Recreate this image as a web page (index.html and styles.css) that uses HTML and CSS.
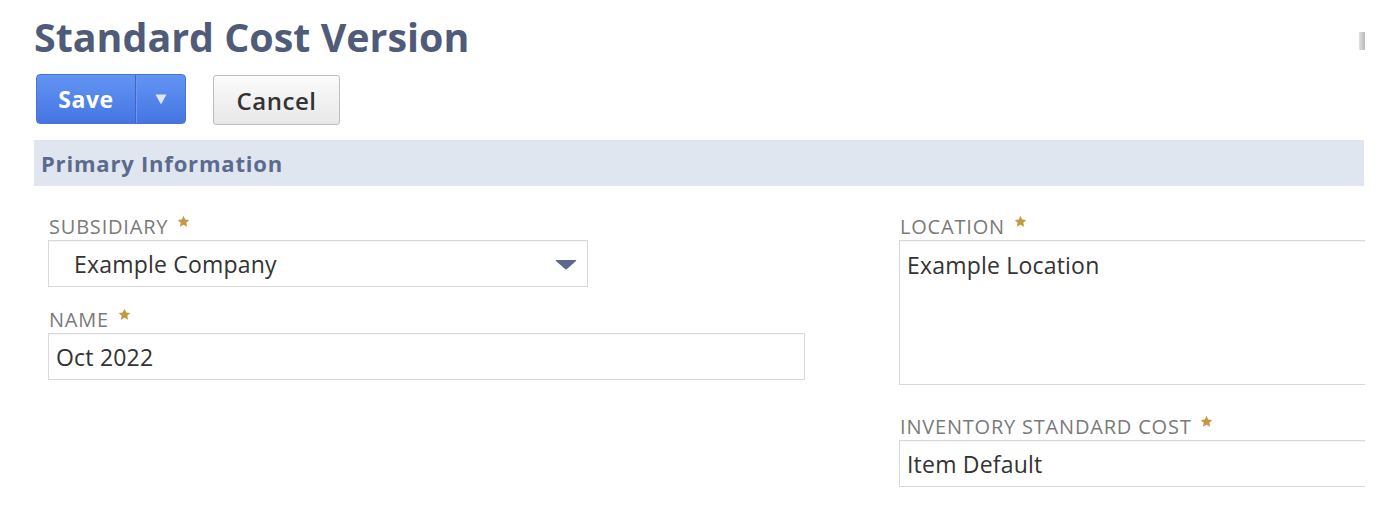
FILE: index.html
```html
<!DOCTYPE html>
<html lang="en">
<head>
<meta charset="utf-8">
<title>Standard Cost Version</title>
<link rel="stylesheet" href="styles.css">
</head>
<body>
<div class="page">
  <div class="title-row">
    <h1 class="title">Standard Cost Version</h1>
    <span class="corner-mark"></span>
  </div>
  <div class="actions">
    <div class="btn-split">
      <button class="btn-save" type="button">Save</button>
      <button class="btn-more" type="button" aria-label="More">
        <svg width="12" height="11" viewBox="0 0 12 11"><path d="M0.5 0.5 H11.5 L6 10.5 Z" fill="#dfe6f7"/></svg>
      </button>
    </div>
    <button class="btn-cancel" type="button">Cancel</button>
  </div>
  <div class="section-head">Primary Information</div>
  <div class="form-grid">
    <div class="col">
      <div class="field">
        <div class="label">SUBSIDIARY <span class="req"><svg width="13" height="13" viewBox="0 0 24 24"><path d="M12 1.5l3.2 6.9 7.5.9-5.5 5.1 1.5 7.4L12 18l-6.7 3.8 1.5-7.4L1.3 9.3l7.5-.9z" fill="#c39a42"/></svg></span></div>
        <div class="box select-box">
          <span class="value">Example Company</span>
          <svg class="caret" width="22" height="11" viewBox="0 0 22 11"><path d="M1 1 H21 Q21.5 1.4 21 2 L12 10 Q11 10.8 10 10 L1 2 Q0.5 1.4 1 1 Z" fill="#5b6a8c"/></svg>
        </div>
      </div>
      <div class="field field-gap-left">
        <div class="label">NAME <span class="req"><svg width="13" height="13" viewBox="0 0 24 24"><path d="M12 1.5l3.2 6.9 7.5.9-5.5 5.1 1.5 7.4L12 18l-6.7 3.8 1.5-7.4L1.3 9.3l7.5-.9z" fill="#c39a42"/></svg></span></div>
        <div class="box input-box"><span class="value">Oct 2022</span></div>
      </div>
    </div>
    <div class="col">
      <div class="field">
        <div class="label">LOCATION <span class="req"><svg width="13" height="13" viewBox="0 0 24 24"><path d="M12 1.5l3.2 6.9 7.5.9-5.5 5.1 1.5 7.4L12 18l-6.7 3.8 1.5-7.4L1.3 9.3l7.5-.9z" fill="#c39a42"/></svg></span></div>
        <div class="box area-box"><span class="value">Example Location</span></div>
      </div>
      <div class="field field-gap-right">
        <div class="label">INVENTORY STANDARD COST <span class="req"><svg width="13" height="13" viewBox="0 0 24 24"><path d="M12 1.5l3.2 6.9 7.5.9-5.5 5.1 1.5 7.4L12 18l-6.7 3.8 1.5-7.4L1.3 9.3l7.5-.9z" fill="#c39a42"/></svg></span></div>
        <div class="box input-box wide"><span class="value">Item Default</span></div>
      </div>
    </div>
  </div>
</div>
</body>
</html>
```

FILE: styles.css
```css
* { box-sizing: border-box; }
html, body { margin: 0; padding: 0; background: #ffffff; }
body { font-family: "Open Sans", "Liberation Sans", sans-serif; }

.page {
  margin-left: 34px;
  width: 1331px;
  height: 528px;
  overflow: hidden;
  padding-top: 13px;
}

.title-row {
  display: flex;
  justify-content: space-between;
  align-items: flex-start;
  height: 48px;
}
.title {
  margin: 0;
  font-size: 39.4px;
  line-height: 48px;
  font-weight: 700;
  color: #4f5b78;
}
.corner-mark {
  width: 6px;
  height: 18px;
  margin-top: 19px;
  background: linear-gradient(to right, #e6e1d6, #b4bac8);
}

.actions {
  display: flex;
  align-items: flex-start;
  gap: 27px;
  margin-top: 13px;
  padding-left: 2px;
}
.btn-split {
  display: flex;
  height: 50px;
  border: 1px solid #4a72d4;
  border-radius: 4px;
  overflow: hidden;
  background: linear-gradient(#6294f3, #4675e2);
}
.btn-split button {
  border: 0;
  background: transparent;
  margin: 0;
  padding: 0;
  font-family: inherit;
  cursor: pointer;
}
.btn-save {
  width: 99px;
  height: 48px;
  font-size: 23px;
  font-weight: 700;
  letter-spacing: 0.6px;
  color: #ffffff;
  border-right: 1px solid #3e66c9 !important;
}
.btn-more {
  width: 49px;
  height: 48px;
  display: flex;
  align-items: center;
  justify-content: center;
  border-left: 1px solid #6d98ee !important;
}
.btn-cancel {
  margin-top: 1px;
  width: 127px;
  height: 50px;
  border: 1px solid #bdbdbd;
  border-radius: 3px;
  background: linear-gradient(#fbfbfb, #e8e8e8);
  font-family: inherit;
  font-size: 24px;
  font-weight: 600;
  letter-spacing: 0.5px;
  color: #333333;
  padding: 0;
}

.section-head {
  margin-top: 15px;
  height: 46px;
  width: 1330px;
  background: #e0e6ef;
  padding-left: 7px;
  font-size: 22px;
  font-weight: 700;
  letter-spacing: 0.8px;
  line-height: 46px;
  color: #5b6a8e;
}

.form-grid {
  display: grid;
  grid-template-columns: 757px 600px;
  column-gap: 94px;
  padding-left: 14px;
  padding-top: 29px;
}
.col { display: flex; flex-direction: column; }
.field { display: flex; flex-direction: column; }
.field-gap-left { margin-top: 21px; }
.field-gap-right { margin-top: 30px; }

.label {
  height: 24px;
  margin-bottom: 1px;
  padding-left: 1px;
  font-size: 20px;
  letter-spacing: 0.8px;
  line-height: 24px;
  color: #7a7a7a;
  display: flex;
  align-items: flex-start;
  gap: 9px;
}
.req { display: inline-flex; margin-top: 0; }

.box {
  border: 1px solid #d9d9d9;
  box-shadow: inset 0 1px 1px rgba(0,0,0,0.04);
  background: #ffffff;
  display: flex;
  align-items: center;
}
.value {
  font-size: 23px;
  letter-spacing: 0.2px;
  color: #333333;
  line-height: 30px;
}
.select-box {
  width: 540px;
  height: 47px;
  padding-left: 25px;
  padding-right: 10px;
  justify-content: space-between;
}
.caret { margin-top: 2px; }
.input-box {
  width: 757px;
  height: 47px;
  padding-left: 7px;
}
.input-box.wide { width: 600px; }
.area-box {
  width: 600px;
  height: 145px;
  padding-left: 7px;
  padding-top: 9px;
  align-items: flex-start;
}
```
